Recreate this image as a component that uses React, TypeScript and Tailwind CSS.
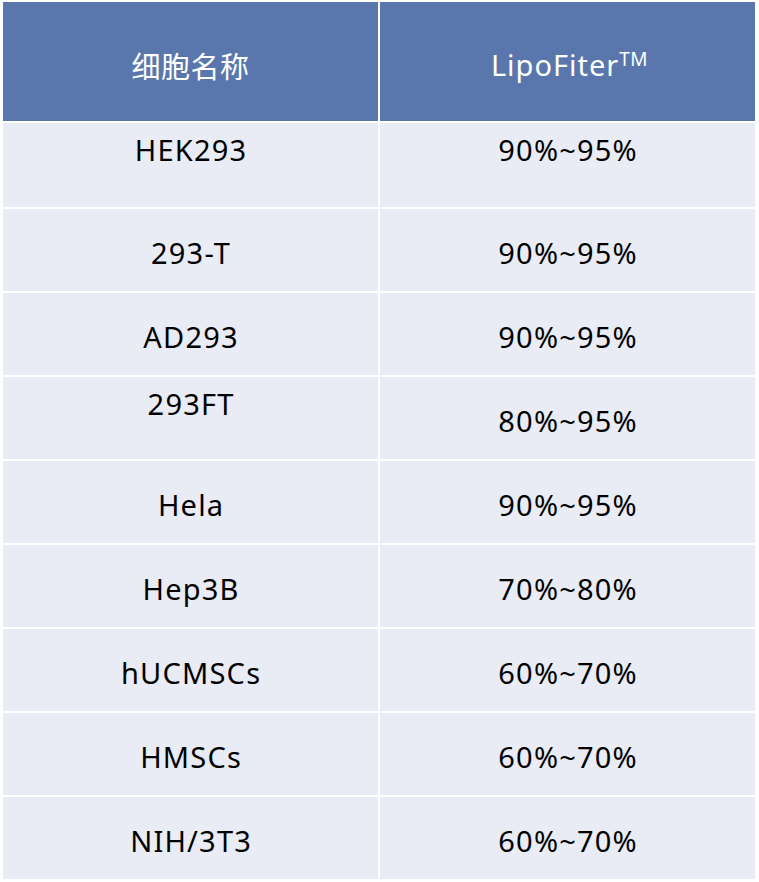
import React from "react";

const rows: { name: string; val: string; nameAlign: "top" | "center"; valAlign: "top" | "center"; h: string }[] = [
  { name: "HEK293", val: "90%~95%", nameAlign: "top", valAlign: "top", h: "h-[84px]" },
  { name: "293-T", val: "90%~95%", nameAlign: "center", valAlign: "center", h: "h-[82px]" },
  { name: "AD293", val: "90%~95%", nameAlign: "center", valAlign: "center", h: "h-[82px]" },
  { name: "293FT", val: "80%~95%", nameAlign: "top", valAlign: "center", h: "h-[82px]" },
  { name: "Hela", val: "90%~95%", nameAlign: "center", valAlign: "center", h: "h-[82px]" },
  { name: "Hep3B", val: "70%~80%", nameAlign: "center", valAlign: "center", h: "h-[82px]" },
  { name: "hUCMSCs", val: "60%~70%", nameAlign: "center", valAlign: "center", h: "h-[82px]" },
  { name: "HMSCs", val: "60%~70%", nameAlign: "center", valAlign: "center", h: "h-[82px]" },
  { name: "NIH/3T3", val: "60%~70%", nameAlign: "center", valAlign: "center", h: "h-[82px]" },
];

function Cell({ text, align, h }: { text: string; align: "top" | "center"; h: string }) {
  return (
    <div
      className={`${h} bg-[#e9ebf5] flex justify-center ${
        align === "top" ? "items-start pt-[8px]" : "items-center pt-[5px]"
      }`}
    >
      <span className="text-[29px] leading-[38px] tracking-[1.2px] pl-[1.2px] text-black">{text}</span>
    </div>
  );
}

export default function App() {
  return (
    <div
      className="w-[759px] h-[882px] bg-white pl-[3px] pt-[2px]"
      style={{ fontFamily: '"Noto Sans", "Noto Sans CJK SC", sans-serif' }}
    >
      <div className="w-[752px] grid grid-cols-[375px_375px] gap-x-[2px] gap-y-[2px] bg-white">
        <div className="h-[119px] bg-[#5977ad] flex items-center justify-center pt-[6px]">
          <span
            className="text-[29px] leading-[38px] tracking-[0.5px] text-white"
            style={{ fontFamily: '"Noto Sans CJK SC", "Noto Sans", sans-serif' }}
          >
            细胞名称
          </span>
        </div>
        <div className="h-[119px] bg-[#5977ad] flex items-center justify-center pt-[6px] pl-[4px]">
          <span className="text-[29px] leading-[38px] tracking-[1px] text-white">
            LipoFiter<sup className="text-[19px] relative top-[-10px] tracking-[0.5px]">TM</sup>
          </span>
        </div>
        {rows.map((r) => (
          <React.Fragment key={r.name}>
            <Cell text={r.name} align={r.nameAlign} h={r.h} />
            <Cell text={r.val} align={r.valAlign} h={r.h} />
          </React.Fragment>
        ))}
      </div>
    </div>
  );
}
